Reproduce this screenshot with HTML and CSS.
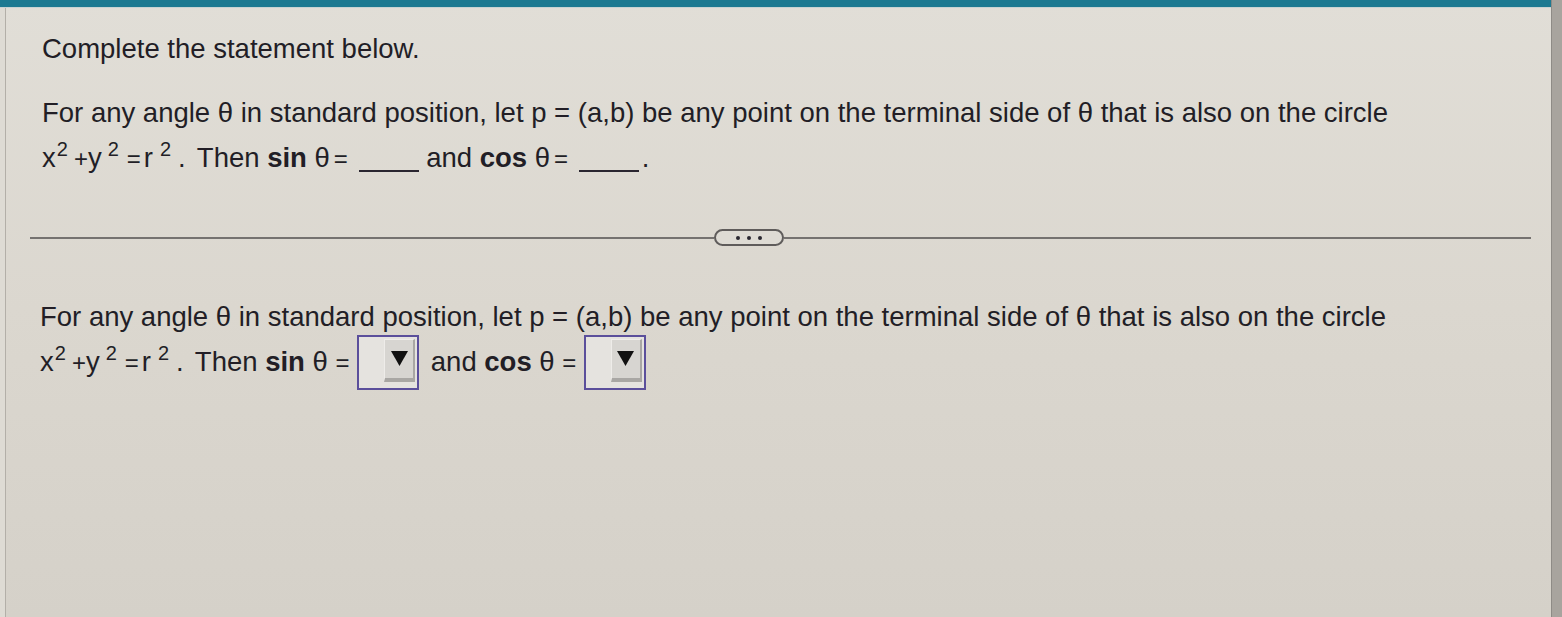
FILE: index.html
```html
<!DOCTYPE html>
<html lang="en">
<head>
<meta charset="utf-8">
<title>Complete the statement</title>
<link rel="stylesheet" href="styles.css">
</head>
<body>
<div class="window">
  <div class="main">
    <div class="topbar"></div>
    <div class="body">
      <div class="gutter"></div>
      <div class="content">
        <div class="text title">Complete the statement below.</div>
        <div class="text para">
          <div>For any angle θ in standard position, let p = (a,b) be any point on the terminal side of θ that is also on the circle</div>
          <div><span class="math">x<sup class="s1">2</sup><span class="op plus">+</span>y<sup class="s2">2</sup><span class="op eq">=</span>r<sup class="s3">2</sup></span><span class="stop">.</span> Then <b>sin</b> θ<span class="op tight">=</span> <span class="blank"></span> and <b>cos</b> θ<span class="op tight">=</span> <span class="blank"></span><span class="end">.</span></div>
        </div>
        <div class="divider">
          <div class="rule rule-left"></div>
          <div class="more"><span class="dot"></span><span class="dot"></span><span class="dot"></span></div>
          <div class="rule"></div>
        </div>
        <div class="text para answer">
          <div>For any angle θ in standard position, let p = (a,b) be any point on the terminal side of θ that is also on the circle</div>
          <div><span class="math">x<sup class="s1">2</sup><span class="op plus">+</span>y<sup class="s2">2</sup><span class="op eq">=</span>r<sup class="s3">2</sup></span><span class="stop">.</span> Then <b>sin</b> θ <span class="op">=</span> <span class="dropdown"><span class="dd-btn"><svg width="17" height="15" viewBox="0 0 17 15"><polygon points="0,0 17,0 8.5,15" fill="#111"/></svg></span></span> and <b>cos</b> θ <span class="op">=</span> <span class="dropdown"><span class="dd-btn"><svg width="17" height="15" viewBox="0 0 17 15"><polygon points="0,0 17,0 8.5,15" fill="#111"/></svg></span></span></div>
        </div>
      </div>
    </div>
  </div>
  <div class="right-strip"></div>
</div>
</body>
</html>
```

FILE: styles.css
```css
html, body {
  margin: 0;
  padding: 0;
  height: 100%;
}

body {
  font-family: "Liberation Sans", Arial, sans-serif;
  color: #221e26;
  background: #d9d5cd;
}

.window {
  display: flex;
  height: 617px;
  overflow: hidden;
}

.main {
  flex: 1;
  display: flex;
  flex-direction: column;
  background: linear-gradient(180deg, #e1ded7 0%, #dbd7cf 50%, #d5d1c9 100%);
}

.topbar {
  height: 7px;
  background: #1c7991;
  border-bottom: 1px solid #c8d3d3;
}

.body {
  flex: 1;
  display: flex;
}

.gutter {
  width: 5px;
  border-right: 1px solid #b3afa8;
  background: #dedbd4;
}

.content {
  flex: 1;
  padding: 18px 20px 0 24px;
}

.text {
  font-size: 27.5px;
  line-height: 45px;
  padding-left: 12px;
}

.para {
  margin-top: 19px;
}

.answer {
  margin-top: 48px;
  padding-left: 10px;
}

sup {
  font-size: 20px;
  line-height: 1;
  vertical-align: 11px;
}

.s1 { margin-left: 1px; }
.s2 { margin-left: 6px; }
.s3 { margin-left: 7px; }

.op {
  font-size: 24px;
  line-height: 1;
}

.tight {
  margin-left: 4px;
  margin-right: 3px;
}

.plus {
  margin-left: 6px;
}

.eq {
  margin: 0 3px 0 8px;
}

.stop {
  margin-left: 7px;
  margin-right: 4px;
}

.end {
  margin-left: 3px;
}

b {
  font-weight: bold;
}

.blank {
  display: inline-block;
  width: 60px;
  height: 0;
  border-bottom: 2px solid #2a2630;
  vertical-align: -5px;
}

.divider {
  margin-top: 49px;
  display: flex;
  align-items: center;
  height: 17px;
}

.rule {
  flex: 1;
  height: 2px;
  background: #757270;
}

.rule-left {
  flex: 0 0 684px;
}

.more {
  width: 66px;
  height: 13px;
  border: 2px solid #5f5c5b;
  border-radius: 9px;
  display: flex;
  align-items: center;
  justify-content: center;
  gap: 7px;
  background: #dedbd4;
}

.dot {
  width: 4px;
  height: 4px;
  border-radius: 50%;
  background: #2a2730;
}

.dropdown {
  display: inline-flex;
  justify-content: flex-end;
  align-items: flex-start;
  box-sizing: border-box;
  width: 62px;
  height: 55px;
  border: 2px solid #5b4f9b;
  background: #e5e3df;
  padding: 2px 2px 0 0;
  vertical-align: middle;
  margin: -7px 4px -4px 0;
}

.dd-btn {
  box-sizing: border-box;
  width: 31px;
  height: 43px;
  display: flex;
  align-items: center;
  justify-content: center;
  background: #d7d5d1;
  border-top: 1px solid #eeece9;
  border-left: 1px solid #eeece9;
  border-right: 2px solid #a9a7a4;
  border-bottom: 4px solid #a9a7a4;
}

.right-strip {
  width: 10px;
  background: #a8a49e;
  border-left: 1px solid #8e8b86;
}
```
